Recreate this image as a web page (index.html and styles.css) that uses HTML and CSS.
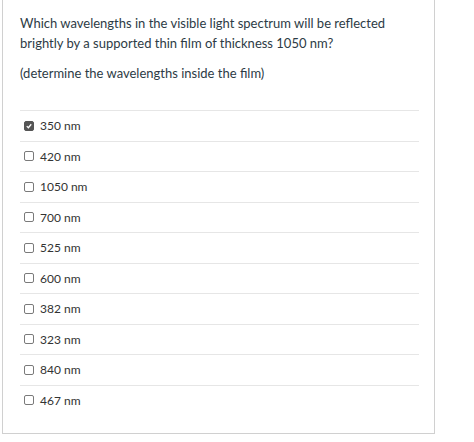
FILE: index.html
```html
<!DOCTYPE html>
<html>
<head>
<meta charset="utf-8">
<link rel="stylesheet" href="styles.css">
</head>
<body>
<div class="card">
  <div class="question">
    <p>Which wavelengths in the visible light spectrum will be reflected brightly by a supported thin film of thickness 1050 nm?</p>
    <p>(determine the wavelengths inside the film)</p>
  </div>
  <div class="answers">
    <label class="answer"><span class="box checked"><svg viewBox="0 0 10 10" width="10" height="10"><path d="M2.2 5.2 L4.2 7.2 L7.8 2.8" fill="none" stroke="#fff" stroke-width="1.6"/></svg></span><span>350 nm</span></label>
    <label class="answer"><span class="box"></span><span>420 nm</span></label>
    <label class="answer"><span class="box"></span><span>1050 nm</span></label>
    <label class="answer"><span class="box"></span><span>700 nm</span></label>
    <label class="answer"><span class="box"></span><span>525 nm</span></label>
    <label class="answer"><span class="box"></span><span>600 nm</span></label>
    <label class="answer"><span class="box"></span><span>382 nm</span></label>
    <label class="answer"><span class="box"></span><span>323 nm</span></label>
    <label class="answer"><span class="box"></span><span>840 nm</span></label>
    <label class="answer"><span class="box"></span><span>467 nm</span></label>
  </div>
</div>
</body>
</html>
```
FILE: styles.css
```css
html, body {
  margin: 0;
  padding: 0;
  background: #fff;
}
body {
  font-family: Lato, "Noto Sans", sans-serif;
  color: #2d3b45;
}
.card {
  margin-left: 2px;
  width: 433px;
  border: 1px solid #d0d0d0;
  border-top: none;
  padding: 0 15px 18px 17px;
  box-sizing: border-box;
}
.question {
  padding-top: 13px;
  padding-bottom: 27px;
  font-size: 13px;
  line-height: 20px;
}
.question p {
  margin: 0 0 10px 0;
}
.question p:last-child {
  margin-bottom: 0;
}
.answer {
  display: flex;
  align-items: center;
  gap: 6px;
  height: 30.5px;
  border-top: 1px solid #e6e6e6;
  padding-left: 4px;
  font-size: 12px;
  color: #333;
  box-sizing: border-box;
}
.box {
  width: 8px;
  height: 8px;
  border: 1px solid #7a7a7a;
  border-radius: 2px;
  display: inline-flex;
  align-items: center;
  justify-content: center;
  flex: none;
}
.box.checked {
  background: #555;
  border-color: #555;
}
.box svg {
  width: 8px;
  height: 8px;
}
```
